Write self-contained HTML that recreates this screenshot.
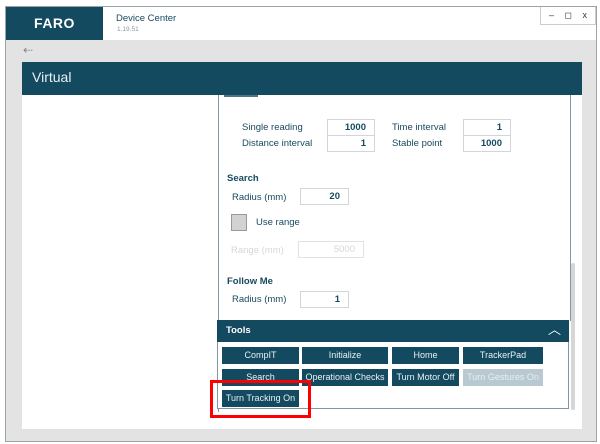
<!DOCTYPE html><html><head><style>
*{box-sizing:border-box;margin:0;padding:0}
body{width:600px;height:444px;background:#fff;font-family:"Liberation Sans",sans-serif;position:relative;overflow:hidden}
.a{position:absolute}
.t{font-size:9.5px;color:#174a5e}
.in{position:absolute;border:1px solid #d0d6da;background:#fff;font-size:9.5px;font-weight:bold;color:#174a5e;text-align:right;padding-right:8px;line-height:15px}
.b{position:absolute;background:#134a60;color:#e8f0f3;font-size:9px;text-align:center;line-height:16px;height:17px;white-space:nowrap;overflow:hidden}
</style></head><body>
<div class="a" style="left:5px;top:6px;width:592px;height:436px;border:1px solid #9aa5ab;background:#e3e3e3"></div>
<div class="a" style="left:6px;top:7px;width:590px;height:33px;background:#fff"></div>
<div class="a" style="left:6px;top:7px;width:97px;height:33px;background:#134a60;color:#fff;font-weight:bold;font-size:14px;line-height:33px;text-align:center;letter-spacing:0.5px">FARO</div>
<div class="a" style="left:116px;top:13px;font-size:9.5px;color:#174a5e">Device Center</div>
<div class="a" style="left:117px;top:26px;font-size:6.5px;color:#8a9aa2">1.19.51</div>
<div class="a" style="left:540px;top:7px;width:56px;height:18px;border:1px solid #ccc;border-top:none;font-size:9px;color:#333;line-height:16px;word-spacing:8px;text-align:center">– ◻ x</div>
<div class="a" style="left:23px;top:43px;font-size:12px;color:#888">⇠</div>
<div class="a" style="left:22px;top:62px;width:560px;height:33px;background:#134a60;color:#e8f0f3;font-size:14px;line-height:31px;padding-left:10px">Virtual</div>
<div class="a" style="left:22px;top:95px;width:560px;height:334px;background:#fff"></div>
<div class="a" style="left:218px;top:95px;width:1px;height:317px;background:#7f98a3"></div>
<div class="a" style="left:570px;top:95px;width:1px;height:226px;background:#7f98a3"></div>
<div class="a" style="left:224px;top:95px;width:34px;height:2px;background:#4d7384"></div>
<div class="a" style="left:571px;top:263px;width:4px;height:147px;background:#d6d6d6;border-radius:2px"></div>
<div class="a t" style="left:242px;top:122px">Single reading</div>
<div class="in" style="left:327px;top:119px;width:48px;height:17px">1000</div>
<div class="a t" style="left:392px;top:122px">Time interval</div>
<div class="in" style="left:463px;top:119px;width:48px;height:17px">1</div>
<div class="a t" style="left:242px;top:138px">Distance interval</div>
<div class="in" style="left:327px;top:135px;width:48px;height:17px">1</div>
<div class="a t" style="left:392px;top:138px">Stable point</div>
<div class="in" style="left:463px;top:135px;width:48px;height:17px">1000</div>
<div class="a t" style="left:227px;top:173px;font-weight:bold">Search</div>
<div class="a t" style="left:232px;top:192px">Radius (mm)</div>
<div class="in" style="left:300px;top:188px;width:49px;height:17px">20</div>
<div class="a" style="left:231px;top:214px;width:16px;height:17px;background:#d2d2d2;border:1px solid #999"></div>
<div class="a t" style="left:256px;top:217px">Use range</div>
<div class="a" style="left:231px;top:245px;font-size:9.5px;color:#d4d8da">Range (mm)</div>
<div class="in" style="left:298px;top:241px;width:66px;height:17px;color:#d4d8da;font-weight:normal;border-color:#e2e2e2">5000</div>
<div class="a t" style="left:227px;top:276px;font-weight:bold">Follow Me</div>
<div class="a t" style="left:232px;top:294px">Radius (mm)</div>
<div class="in" style="left:300px;top:291px;width:49px;height:17px">1</div>
<div class="a" style="left:217px;top:320px;width:352px;height:89px;border:1px solid #7f98a3;background:#fff"></div>
<div class="a" style="left:217px;top:320px;width:352px;height:22px;background:#134a60;color:#fff;font-size:9.5px;font-weight:bold;line-height:21px;padding-left:9px">Tools<span style="position:absolute;right:8px;top:-1px;font-size:13px;font-weight:normal">︿</span></div>
<div class="b" style="left:222px;top:347px;width:77px">CompIT</div>
<div class="b" style="left:302px;top:347px;width:86px">Initialize</div>
<div class="b" style="left:392px;top:347px;width:67px">Home</div>
<div class="b" style="left:463px;top:347px;width:80px">TrackerPad</div>
<div class="b" style="left:222px;top:369px;width:77px">Search</div>
<div class="b" style="left:302px;top:369px;width:86px">Operational Checks</div>
<div class="b" style="left:392px;top:369px;width:67px">Turn Motor Off</div>
<div class="b" style="left:463px;top:369px;width:80px;background:#b8c9d1;color:#e8eef1">Turn Gestures On</div>
<div class="b" style="left:222px;top:390px;width:77px">Turn Tracking On</div>
<div class="a" style="left:210px;top:380px;width:101px;height:38px;border:3px solid #f00"></div>
</body></html>
